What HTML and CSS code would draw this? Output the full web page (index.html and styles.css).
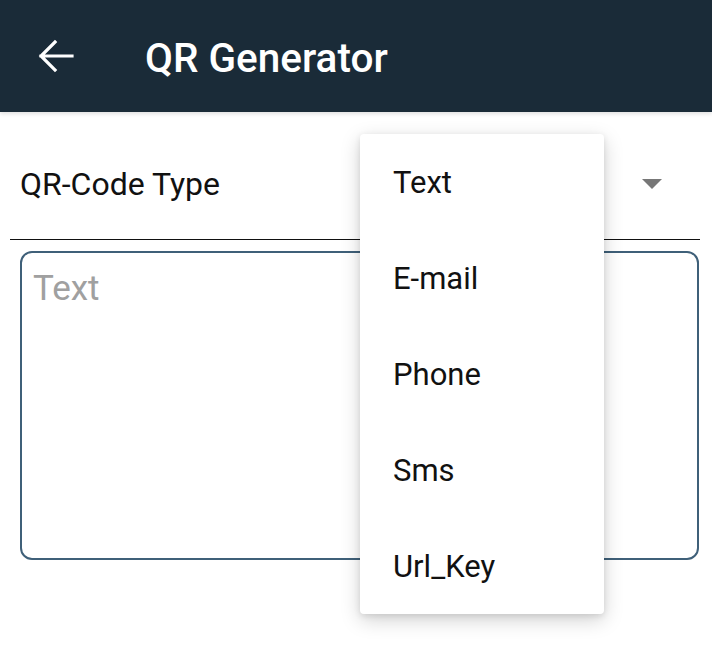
FILE: index.html
```html
<!DOCTYPE html>
<html>
<head>
<meta charset="utf-8">
<link rel="stylesheet" href="styles.css">
</head>
<body>
<header class="appbar">
  <svg class="back" width="36" height="34" viewBox="0 0 36 34"><path d="M3 17H34M17 3L3 17L17 31" fill="none" stroke="#fff" stroke-width="3.2" stroke-linecap="square"/></svg>
  <h1 class="title">QR Generator</h1>
</header>
<main class="content">
  <div class="select">
    <span class="label">QR-Code Type</span>
    <span class="caret"></span>
  </div>
  <div class="textarea"><span class="placeholder">Text</span></div>
</main>
<ul class="menu">
  <li>Text</li>
  <li>E-mail</li>
  <li>Phone</li>
  <li>Sms</li>
  <li>Url_Key</li>
</ul>
</body>
</html>
```
FILE: styles.css
```css
html, body { margin: 0; padding: 0; }
body {
  width: 712px;
  height: 650px;
  background: #fff;
  font-family: Roboto, "Noto Sans", sans-serif;
  position: relative;
  overflow: hidden;
}
.appbar {
  height: 112px;
  background: #1a2b38;
  display: flex;
  align-items: center;
  padding-left: 38px;
  box-sizing: border-box;
  box-shadow: 0 2px 4px rgba(0,0,0,0.12);
}
.back { flex: none; }
.title {
  margin: 0 0 0 71px;
  color: #fff;
  font-size: 40.5px;
  font-weight: 500;
  line-height: 1;
  padding-top: 4px;
}
.content { padding: 0 12px 0 10px; }
.select {
  height: 128px;
  border-bottom: 1.5px solid #111;
  display: flex;
  align-items: center;
  justify-content: space-between;
  padding: 16px 0 0 10px;
  box-sizing: border-box;
}
.label { font-size: 32px; color: #111; }
.caret {
  width: 0; height: 0;
  border-left: 10px solid transparent;
  border-right: 10px solid transparent;
  border-top: 10px solid #777;
  margin-right: 38px;
  margin-top: 1px;
}
.textarea {
  margin: 11px 1px 0 10px;
  height: 309px;
  border: 2px solid #3f6079;
  border-radius: 12px;
  box-sizing: border-box;
  padding: 16px 11px;
}
.placeholder { font-size: 35px; color: #a0a0a0; line-height: 40px; }
.menu {
  position: absolute;
  left: 360px;
  top: 134px;
  width: 244px;
  margin: 0;
  padding: 0;
  list-style: none;
  background: #fff;
  border-radius: 4px;
  box-shadow: 0 6px 20px rgba(0,0,0,0.18), 0 2px 6px rgba(0,0,0,0.1);
}
.menu li {
  height: 96px;
  display: flex;
  align-items: center;
  padding-left: 33px;
  font-size: 31px;
  color: #111;
}
```
